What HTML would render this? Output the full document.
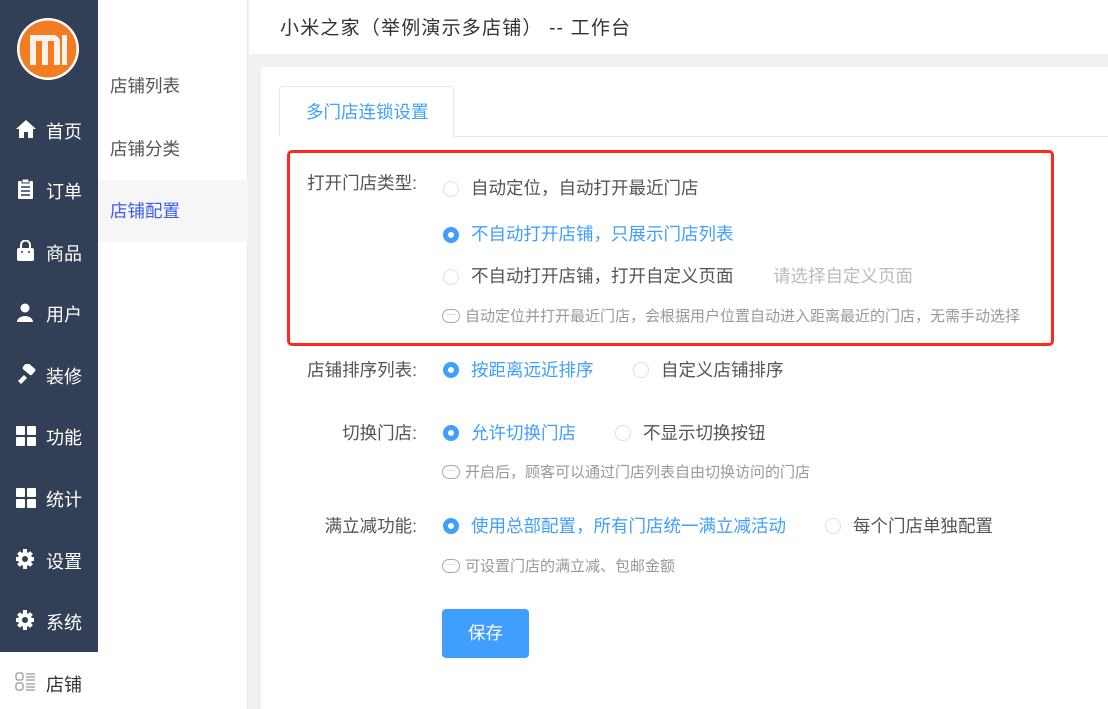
<!DOCTYPE html>
<html><head><meta charset="utf-8"><style>
*{margin:0;padding:0;box-sizing:border-box}
body{width:1108px;height:709px;overflow:hidden;background:#f1f1f1;font-family:"Liberation Sans","Noto Sans CJK SC",sans-serif;position:relative;color:#333}
.a{position:absolute;white-space:nowrap}
#side{left:0;top:0;width:98px;height:652px;background:#333f56}
.mi{color:#fff;font-size:18px;left:46px}
.ic{left:15px}
#sub{left:98px;top:0;width:150px;height:709px;background:#fff;border-right:1px solid #e8e8e8}
.sm{left:110px;font-size:17.5px;color:#555}
#hdr{left:249px;top:0;width:859px;height:54px;background:#fff}
#card{left:261px;top:67px;width:847px;height:642px;background:#fff;border-radius:4px 0 0 0}
.lbl{font-size:17.5px;color:#555;text-align:right;width:140px;left:277px}
.r{width:16px;height:16px;border:1px solid #dcdfe6;border-radius:50%;background:#fff}
.r.on{border:5px solid #409eff;background:#fff}
.t{font-size:17.5px;color:#555}
.t.b{color:#409eff}
.h{font-size:15px;color:#999;line-height:18px}
.hi{width:18px;height:14px;border:1px solid #aaa;border-radius:8px;display:inline-block;vertical-align:middle;margin-right:5px;margin-top:-3px;text-align:center;font-size:9px;line-height:8px;color:#999}
</style></head><body>
<div class="a" style="left:0;top:652px;width:98px;height:57px;background:#fff"></div>
<div class="a" id="side"></div>
<svg class="a" style="left:16px;top:18px" width="64" height="64" viewBox="0 0 64 64"><circle cx="32" cy="31" r="31" fill="#fff"/><circle cx="32" cy="31" r="28.5" fill="#f37b22"/><path d="M14 17h23a7 7 0 0 1 7 7v23h-6V23H32v24h-6V23h-6v24h-6z M46 17h5v30h-5z" fill="#f7f2ea"/></svg>
<svg class="a ic" style="top:119px" width="22" height="20" viewBox="0 0 22 20"><path d="M11 1L1 10h3v9h5v-6h4v6h5v-9h3z" fill="#fff"/></svg>
<div class="a mi" style="top:118px">首页</div>
<svg class="a ic" style="top:178px" width="22" height="22" viewBox="0 0 22 22"><rect x="3" y="3" width="15" height="18" rx="1" fill="#fff"/><rect x="7" y="1" width="7" height="4" fill="#fff" stroke="#333f56"/><path d="M6 9h9M6 13h9M6 17h9" stroke="#333f56" stroke-width="1.5"/></svg>
<div class="a mi" style="top:178px">订单</div>
<svg class="a ic" style="top:240px" width="22" height="22" viewBox="0 0 22 22"><rect x="2" y="8" width="17" height="13" rx="2" fill="#fff"/><path d="M6 8V5a4.5 4.5 0 0 1 9 0v3" stroke="#fff" stroke-width="2" fill="none"/><circle cx="7" cy="12" r="1" fill="#333f56"/><circle cx="14" cy="12" r="1" fill="#333f56"/></svg>
<div class="a mi" style="top:240px">商品</div>
<svg class="a ic" style="top:302px" width="22" height="22" viewBox="0 0 22 22"><circle cx="10" cy="6" r="4.5" fill="#fff"/><path d="M2 20a8 6 0 0 1 16 0z" fill="#fff"/></svg>
<div class="a mi" style="top:301px">用户</div>
<svg class="a ic" style="top:364px" width="22" height="22" viewBox="0 0 22 22"><rect x="8" y="1" width="12" height="8" rx="2" transform="rotate(40 14 5)" fill="#fff"/><path d="M9 11l-6 6 3 3 6-6z" fill="#fff"/></svg>
<div class="a mi" style="top:363px">装修</div>
<svg class="a ic" style="top:425px" width="22" height="22" viewBox="0 0 22 22"><rect x="1" y="1" width="9" height="9" rx="1" fill="#fff"/><rect x="12" y="1" width="9" height="9" rx="1" fill="#fff"/><rect x="1" y="12" width="9" height="9" rx="1" fill="#fff"/><rect x="12" y="12" width="9" height="9" rx="1" fill="#fff"/></svg>
<div class="a mi" style="top:424px">功能</div>
<svg class="a ic" style="top:487px" width="22" height="22" viewBox="0 0 22 22"><rect x="1" y="1" width="9" height="9" rx="1" fill="#fff"/><rect x="12" y="1" width="9" height="9" rx="1" fill="#fff"/><rect x="1" y="12" width="9" height="9" rx="1" fill="#fff"/><rect x="12" y="12" width="9" height="9" rx="1" fill="#fff"/></svg>
<div class="a mi" style="top:486px">统计</div>
<svg class="a ic" style="top:548px" width="22" height="22" viewBox="0 0 22 22"><circle cx="10" cy="11" r="7" fill="#fff"/><g stroke="#fff" stroke-width="4"><path d="M10 1v20M1 11h18M3.5 4.5l13 13M16.5 4.5l-13 13"/></g><circle cx="10" cy="11" r="3" fill="#333f56"/></svg>
<div class="a mi" style="top:548px">设置</div>
<svg class="a ic" style="top:609px" width="22" height="22" viewBox="0 0 22 22"><circle cx="10" cy="11" r="7" fill="#fff"/><g stroke="#fff" stroke-width="4"><path d="M10 1v20M1 11h18M3.5 4.5l13 13M16.5 4.5l-13 13"/></g><circle cx="10" cy="11" r="3" fill="#333f56"/></svg>
<div class="a mi" style="top:609px">系统</div>
<svg class="a ic" style="top:671px" width="22" height="22" viewBox="0 0 22 22"><rect x="1" y="2" width="7" height="7" rx="2" fill="none" stroke="#999" stroke-width="1.3"/><rect x="1" y="12" width="7" height="7" rx="2" fill="none" stroke="#999" stroke-width="1.3"/><path d="M11 3h9M11 6h9M11 9h9M11 13h9M11 16h9M11 19h9" stroke="#999" stroke-width="1.2"/></svg>
<div class="a mi" style="top:671px;color:#333">店铺</div>
<div class="a" id="sub"></div>
<div class="a sm" style="top:73px">店铺列表</div>
<div class="a sm" style="top:136px">店铺分类</div>
<div class="a" style="left:98px;top:180px;width:150px;height:62px;background:#f6f6f6"></div>
<div class="a sm" style="top:198px;color:#3b5cf0">店铺配置</div>
<div class="a" id="hdr"></div>
<div class="a" style="left:280px;top:13px;font-size:19px;letter-spacing:1.2px;color:#333">小米之家（举例演示多店铺） -- 工作台</div>
<div class="a" id="card"></div>
<div class="a" style="left:279px;top:136px;width:829px;height:1px;background:#e4e7ed"></div>
<div class="a" style="left:279px;top:86px;width:175px;height:51px;border:1px solid #e4e7ed;border-bottom:1px solid #fff;border-radius:4px 4px 0 0;background:#fff"></div>
<div class="a" style="left:306px;top:99px;font-size:17.5px;color:#409eff">多门店连锁设置</div>
<div class="a" style="left:287px;top:150px;width:767px;height:196px;border:3px solid #ff2a1f;border-radius:5px"></div>
<div class="a lbl" style="top:170px">打开门店类型:</div>
<div class="a r" style="left:443px;top:181px"></div><div class="a t" style="left:471px;top:175px">自动定位，自动打开最近门店</div>
<div class="a r on" style="left:443px;top:227px"></div><div class="a t b" style="left:471px;top:221px">不自动打开店铺，只展示门店列表</div>
<div class="a r" style="left:443px;top:269px"></div><div class="a t" style="left:471px;top:263px">不自动打开店铺，打开自定义页面</div>
<div class="a t" style="left:773px;top:263px;color:#bbb">请选择自定义页面</div>
<div class="a h" style="left:442px;top:308px"><span class="hi">···</span>自动定位并打开最近门店，会根据用户位置自动进入距离最近的门店，无需手动选择</div>
<div class="a lbl" style="top:357px">店铺排序列表:</div>
<div class="a r on" style="left:443px;top:362px"></div><div class="a t b" style="left:471px;top:357px">按距离远近排序</div>
<div class="a r" style="left:633px;top:362px"></div><div class="a t" style="left:661px;top:357px">自定义店铺排序</div>
<div class="a lbl" style="top:420px">切换门店:</div>
<div class="a r on" style="left:443px;top:425px"></div><div class="a t b" style="left:471px;top:420px">允许切换门店</div>
<div class="a r" style="left:615px;top:425px"></div><div class="a t" style="left:643px;top:420px">不显示切换按钮</div>
<div class="a h" style="left:442px;top:464px"><span class="hi">···</span>开启后，顾客可以通过门店列表自由切换访问的门店</div>
<div class="a lbl" style="top:513px">满立减功能:</div>
<div class="a r on" style="left:443px;top:518px"></div><div class="a t b" style="left:471px;top:513px">使用总部配置，所有门店统一满立减活动</div>
<div class="a r" style="left:825px;top:518px"></div><div class="a t" style="left:853px;top:513px">每个门店单独配置</div>
<div class="a h" style="left:442px;top:558px"><span class="hi">···</span>可设置门店的满立减、包邮金额</div>
<div class="a" style="left:442px;top:609px;width:87px;height:49px;background:#409eff;border-radius:4px;color:#fff;font-size:17.5px;text-align:center;line-height:49px">保存</div>
</body></html>
